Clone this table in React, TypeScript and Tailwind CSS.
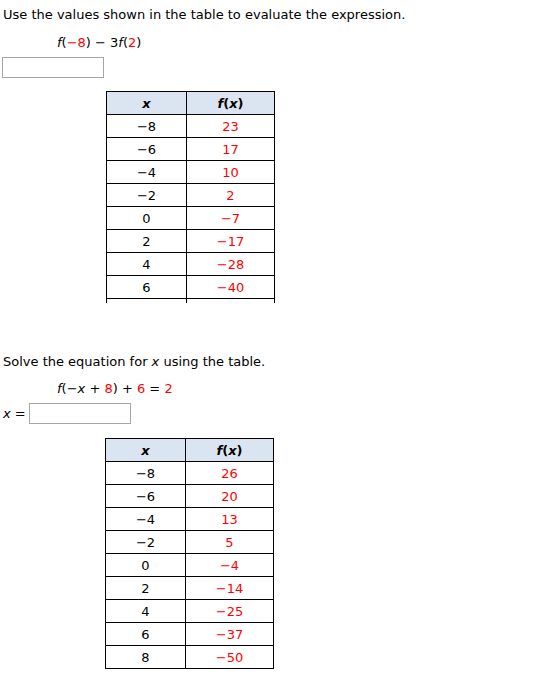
import React from "react";

const table1 = [
  ["−8", "23"],
  ["−6", "17"],
  ["−4", "10"],
  ["−2", "2"],
  ["0", "−7"],
  ["2", "−17"],
  ["4", "−28"],
  ["6", "−40"],
];

const table2 = [
  ["−8", "26"],
  ["−6", "20"],
  ["−4", "13"],
  ["−2", "5"],
  ["0", "−4"],
  ["2", "−14"],
  ["4", "−25"],
  ["6", "−37"],
  ["8", "−50"],
];

function Red({ children }: { children: React.ReactNode }) {
  return <span className="text-[#f00]">{children}</span>;
}

function ValueTable({ rows, open }: { rows: string[][]; open?: boolean }) {
  return (
    <table className="border-collapse w-[168px] table-fixed">
      <colgroup>
        <col className="w-[80px]" />
        <col className="w-[88px]" />
      </colgroup>
      <thead>
        <tr className="bg-[#dbe5f1]">
          <th className="border border-black h-[23px] p-0 pt-[2px] font-bold italic">x</th>
          <th className="border border-black h-[23px] p-0 pt-[2px] font-bold">
            <i>f</i>(<i>x</i>)
          </th>
        </tr>
      </thead>
      <tbody>
        {rows.map(([x, y]) => (
          <tr key={x}>
            <td className="border border-black h-[23px] p-0 pt-[2px] text-center">{x}</td>
            <td className="border border-black h-[23px] p-0 pt-[2px] text-center text-[#f00]">{y}</td>
          </tr>
        ))}
        {open && (
          <tr>
            <td className="border-x border-black h-[4px] p-0" />
            <td className="border-x border-black h-[4px] p-0" />
          </tr>
        )}
      </tbody>
    </table>
  );
}

export default function App() {
  return (
    <div className="w-[540px] h-[685px] bg-white text-black text-[13px] leading-[16px] font-['Verdana','DejaVu_Sans',sans-serif]">
      {/* Part 1 */}
      <p className="pt-[7px] pl-[3px]">Use the values shown in the table to evaluate the expression.</p>
      <div className="mt-[12px] pl-[57px]">
        <i>f</i>(<Red>−8</Red>) − 3<i>f</i>(<Red>2</Red>)
      </div>
      <div className="mt-[6px] ml-[2px] w-[102px] h-[21px] border border-[#a6a6a6]" />
      <div className="mt-[13px] ml-[106px]">
        <ValueTable rows={table1} open />
      </div>

      {/* Part 2 */}
      <p className="mt-[51px] pl-[3px]">
        Solve the equation for <i>x</i> using the table.
      </p>
      <div className="mt-[11px] pl-[57px]">
        <i>f</i>(−<i>x</i> + <Red>8</Red>) + <Red>6</Red> = <Red>2</Red>
      </div>
      <div className="mt-[6px] flex items-center">
        <span className="pl-[3px] w-[29px] pt-[1px]">
          <i>x</i> =
        </span>
        <div className="w-[102px] h-[21px] border border-[#a6a6a6]" />
      </div>
      <div className="mt-[14px] ml-[105px]">
        <ValueTable rows={table2} />
      </div>
    </div>
  );
}
